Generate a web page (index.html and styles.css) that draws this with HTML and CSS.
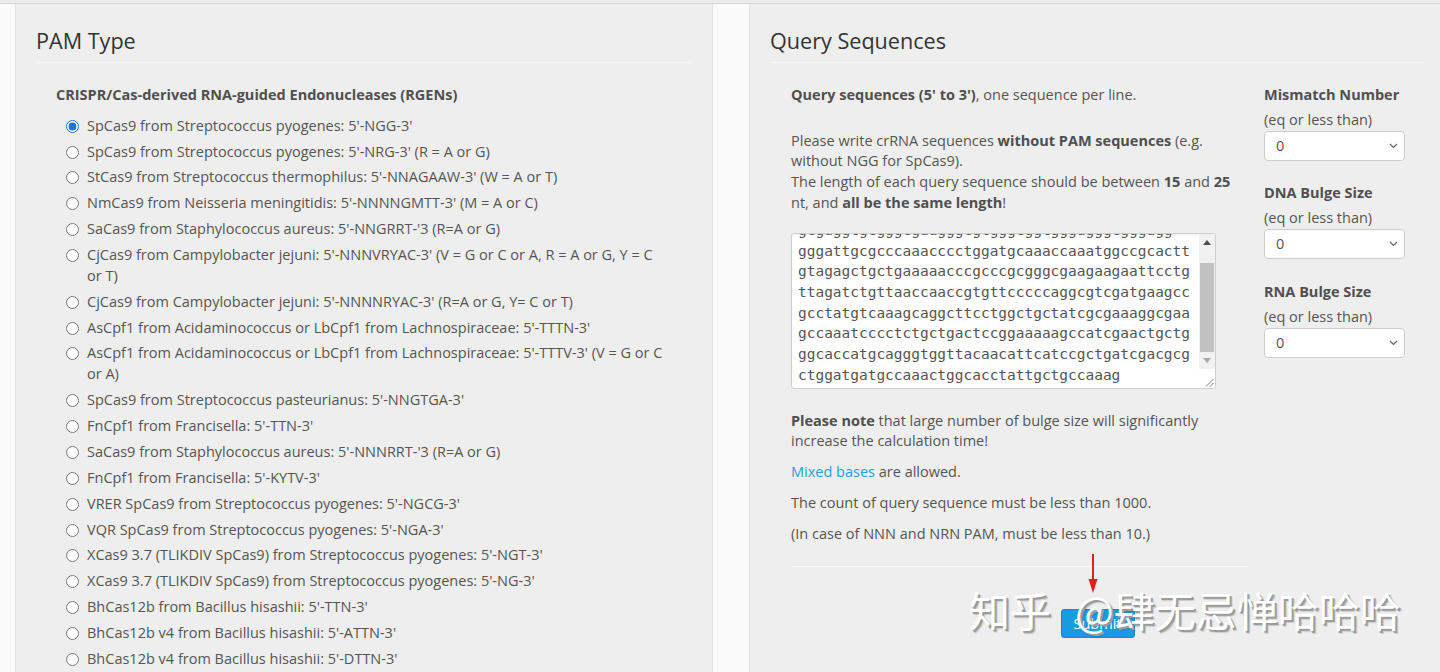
FILE: index.html
```html
<!DOCTYPE html>
<html>
<head>
<meta charset="utf-8">
<link rel="stylesheet" href="styles.css">
</head>
<body>
<div class="topbar"></div>
<div class="page">
  <section class="panel panel-left">
    <h3 class="panel-title">PAM Type</h3>
    <hr class="title-rule">
    <div class="pam-body">
      <div class="group-title">CRISPR/Cas-derived RNA-guided Endonucleases (RGENs)</div>
      <ul class="radio-list">
        <li><label><input type="radio" name="pam" checked><span>SpCas9 from Streptococcus pyogenes: 5'-NGG-3'</span></label></li>
        <li><label><input type="radio" name="pam"><span>SpCas9 from Streptococcus pyogenes: 5'-NRG-3' (R = A or G)</span></label></li>
        <li><label><input type="radio" name="pam"><span>StCas9 from Streptococcus thermophilus: 5'-NNAGAAW-3' (W = A or T)</span></label></li>
        <li><label><input type="radio" name="pam"><span>NmCas9 from Neisseria meningitidis: 5'-NNNNGMTT-3' (M = A or C)</span></label></li>
        <li><label><input type="radio" name="pam"><span>SaCas9 from Staphylococcus aureus: 5'-NNGRRT-'3 (R=A or G)</span></label></li>
        <li><label><input type="radio" name="pam"><span>CjCas9 from Campylobacter jejuni: 5'-NNNVRYAC-3' (V = G or C or A, R = A or G, Y = C or T)</span></label></li>
        <li><label><input type="radio" name="pam"><span>CjCas9 from Campylobacter jejuni: 5'-NNNNRYAC-3' (R=A or G, Y= C or T)</span></label></li>
        <li><label><input type="radio" name="pam"><span>AsCpf1 from Acidaminococcus or LbCpf1 from Lachnospiraceae: 5'-TTTN-3'</span></label></li>
        <li><label><input type="radio" name="pam"><span>AsCpf1 from Acidaminococcus or LbCpf1 from Lachnospiraceae: 5'-TTTV-3' (V = G or C or A)</span></label></li>
        <li><label><input type="radio" name="pam"><span>SpCas9 from Streptococcus pasteurianus: 5'-NNGTGA-3'</span></label></li>
        <li><label><input type="radio" name="pam"><span>FnCpf1 from Francisella: 5'-TTN-3'</span></label></li>
        <li><label><input type="radio" name="pam"><span>SaCas9 from Staphylococcus aureus: 5'-NNNRRT-'3 (R=A or G)</span></label></li>
        <li><label><input type="radio" name="pam"><span>FnCpf1 from Francisella: 5'-KYTV-3'</span></label></li>
        <li><label><input type="radio" name="pam"><span>VRER SpCas9 from Streptococcus pyogenes: 5'-NGCG-3'</span></label></li>
        <li><label><input type="radio" name="pam"><span>VQR SpCas9 from Streptococcus pyogenes: 5'-NGA-3'</span></label></li>
        <li><label><input type="radio" name="pam"><span>XCas9 3.7 (TLIKDIV SpCas9) from Streptococcus pyogenes: 5'-NGT-3'</span></label></li>
        <li><label><input type="radio" name="pam"><span>XCas9 3.7 (TLIKDIV SpCas9) from Streptococcus pyogenes: 5'-NG-3'</span></label></li>
        <li><label><input type="radio" name="pam"><span>BhCas12b from Bacillus hisashii: 5'-TTN-3'</span></label></li>
        <li><label><input type="radio" name="pam"><span>BhCas12b v4 from Bacillus hisashii: 5'-ATTN-3'</span></label></li>
        <li><label><input type="radio" name="pam"><span>BhCas12b v4 from Bacillus hisashii: 5'-DTTN-3'</span></label></li>
      </ul>
    </div>
  </section>

  <section class="panel panel-right">
    <h3 class="panel-title">Query Sequences</h3>
    <hr class="title-rule">
    <div class="query-row">
      <div class="query-main">
        <p class="intro"><b>Query sequences (5' to 3')</b>, one sequence per line.</p>
        <p class="rules">Please write crRNA sequences <b>without PAM sequences</b> (e.g. without NGG for SpCas9).<br>The length of each query sequence should be between <b>15</b> and <b>25</b> nt, and <b>all be the same length</b>!</p>
        <div class="textarea">
          <div class="ta-text">
            <div class="ta-lines">gcgaggtgcgggcgaagggcgtgggcggtgggagggcgggagg
gggattgcgcccaaacccctggatgcaaaccaaatggccgcactt
gtagagctgctgaaaaacccgcccgcgggcgaagaagaattcctg
ttagatctgttaaccaaccgtgttcccccaggcgtcgatgaagcc
gcctatgtcaaagcaggcttcctggctgctatcgcgaaaggcgaa
gccaaatcccctctgctgactccggaaaaagccatcgaactgctg
ggcaccatgcagggtggttacaacattcatccgctgatcgacgcg
ctggatgatgccaaactggcacctattgctgccaaag</div>
          </div>
          <div class="ta-scroll">
            <div class="sb-btn"><svg width="8" height="5" viewBox="0 0 8 5"><path d="M0 5 L4 0 L8 5 Z" fill="#505050"/></svg></div>
            <div class="sb-track"><div class="sb-thumb"></div></div>
            <div class="sb-btn"><svg width="8" height="5" viewBox="0 0 8 5"><path d="M0 0 L4 5 L8 0 Z" fill="#a8a8a8"/></svg></div>
            <div class="sb-corner"><svg width="9" height="9" viewBox="0 0 9 9"><path d="M8.5 1 L1 8.5 M8.5 5 L5 8.5" stroke="#777" stroke-width="1" fill="none"/></svg></div>
          </div>
        </div>
        <p class="note"><b>Please note</b> that large number of bulge size will significantly increase the calculation time!</p>
        <p class="note2"><a class="link">Mixed bases</a> are allowed.</p>
        <p class="note2">The count of query sequence must be less than 1000.</p>
        <p class="note2 last">(In case of NNN and NRN PAM, must be less than 10.)</p>
        <hr class="q-rule">
      </div>
      <div class="query-side">
        <div class="field">
          <div class="field-label">Mismatch Number</div>
          <div class="field-sub">(eq or less than)</div>
          <div class="select"><span>0</span><svg width="9" height="6" viewBox="0 0 9 6"><path d="M1 1 L4.5 4.5 L8 1" stroke="#666" stroke-width="1.2" fill="none"/></svg></div>
        </div>
        <div class="field">
          <div class="field-label">DNA Bulge Size</div>
          <div class="field-sub">(eq or less than)</div>
          <div class="select"><span>0</span><svg width="9" height="6" viewBox="0 0 9 6"><path d="M1 1 L4.5 4.5 L8 1" stroke="#666" stroke-width="1.2" fill="none"/></svg></div>
        </div>
        <div class="field">
          <div class="field-label">RNA Bulge Size</div>
          <div class="field-sub">(eq or less than)</div>
          <div class="select"><span>0</span><svg width="9" height="6" viewBox="0 0 9 6"><path d="M1 1 L4.5 4.5 L8 1" stroke="#666" stroke-width="1.2" fill="none"/></svg></div>
        </div>
      </div>
    </div>
    <div class="submit-row"><button class="btn-submit">Submit</button></div>
  </section>
</div>

<svg class="red-arrow" width="14" height="42" viewBox="0 0 14 42"><path d="M7 1 L7 30" stroke="#e3201c" stroke-width="2"/><path d="M2.5 26 L7 40 L11.5 26 Z" fill="#e3201c"/></svg>
<div class="watermark"><span class="wm-a">知乎</span><span class="wm-b">@肆无忌惮哈哈哈</span></div>
</body>
</html>
```

FILE: styles.css
```css
html, body {
  margin: 0;
  padding: 0;
}
body {
  background: #fafafa;
  font-family: "Open Sans", "Noto Sans", sans-serif;
  font-size: 14.5px;
  line-height: 20.7px;
  color: #555;
  height: 672px;
  overflow: hidden;
  position: relative;
}
.topbar {
  height: 3px;
  background: #ebebeb;
  border-bottom: 1px solid #d4d4d4;
}
.page {
  display: flex;
  padding-left: 15px;
  gap: 36px;
  height: 668px;
}
.panel {
  background: #eeeeee;
  border-left: 1px solid #e2e2e2;
  border-right: 1px solid #e2e2e2;
  padding: 24px 20px 0 20px;
  box-sizing: border-box;
}
.panel-left {
  width: 698px;
  flex: none;
}
.panel-right {
  flex: 1;
  border-right: none;
  padding-right: 15px;
}
.panel-title {
  margin: 0;
  font-size: 21.6px;
  font-weight: 400;
  line-height: 26px;
  color: #333;
}
.title-rule {
  margin: 8px 0 0;
  border: 0;
  border-top: 1px solid #f6f6f6;
  height: 0;
}
.pam-body {
  padding: 0 25px 0 20px;
  margin-top: 21.6px;
}
.group-title {
  font-weight: 700;
  color: #505050;
  margin-bottom: 10.35px;
}
.radio-list {
  list-style: none;
  margin: 0;
  padding: 0;
}
.radio-list li {
  margin-bottom: 5.2px;
}
.radio-list label {
  display: flex;
  align-items: flex-start;
}
.radio-list input {
  flex: none;
  width: 13px;
  height: 13px;
  margin: 4px 8px 0 10px;
  accent-color: #1a73e8;
}
.query-row {
  display: flex;
  gap: 16px;
  padding-left: 21px;
  margin-top: 21.6px;
}
.query-main {
  width: 457px;
  flex: none;
}
.query-main p {
  margin: 0;
}
.query-main b {
  color: #4f4f4f;
}
.query-main .intro {
  margin-bottom: 25.3px;
}
.textarea {
  margin-top: 19.5px;
  width: 425px;
  height: 156px;
  box-sizing: border-box;
  border: 1px solid #cfcfcf;
  border-radius: 3px;
  background: #fff;
  display: flex;
  overflow: hidden;
  box-shadow: inset 0 1px 1px rgba(0,0,0,0.06);
}
.ta-text {
  flex: 1;
  overflow: hidden;
  padding: 0 6px;
  font-family: "DejaVu Sans Mono", monospace;
  font-size: 14.47px;
  line-height: 20.7px;
  color: #555;
}
.ta-lines {
  white-space: pre;
  margin-top: -14px;
}
.ta-scroll {
  width: 16px;
  flex: none;
  display: flex;
  flex-direction: column;
  background: #f1f1f1;
}
.sb-btn {
  height: 17px;
  display: flex;
  align-items: center;
  justify-content: center;
  flex: none;
}
.sb-track {
  flex: 1;
  display: flex;
  flex-direction: column;
  padding-top: 12px;
}
.sb-thumb {
  flex: 1;
  background: #c1c1c1;
  margin: 0 1px;
}
.sb-corner {
  height: 18px;
  flex: none;
  background: #fff;
  display: flex;
  align-items: flex-end;
  justify-content: flex-end;
  padding: 0 1px 1px 0;
}
.query-main .note {
  margin-top: 21.6px;
  margin-bottom: 10.35px;
}
.query-main .note2 {
  margin-bottom: 10.35px;
}
.query-main .note2.last {
  margin-bottom: 0;
}
.link {
  color: #2a9fd6;
  text-decoration: none;
}
.q-rule {
  margin: 21px 0 0;
  border: 0;
  border-top: 1px solid #f8f8f8;
  height: 0;
}
.query-side {
  width: 141px;
  flex: none;
}
.field {
  margin-bottom: 22.3px;
}
.field-label {
  font-weight: 700;
  color: #505050;
  margin-bottom: 4.3px;
}
.field-sub {
  margin-bottom: 0.6px;
}
.select {
  height: 30px;
  box-sizing: border-box;
  background: #fff;
  border: 1px solid #cdcdcd;
  border-radius: 4px;
  display: flex;
  align-items: center;
  justify-content: space-between;
  padding: 0 6px 0 11px;
  color: #555;
}
.submit-row {
  display: flex;
  justify-content: center;
  margin-top: 42px;
}
.btn-submit {
  width: 74px;
  height: 29px;
  background: #1a9be1;
  border: 1px solid #1588c8;
  border-radius: 3px;
  color: #fff;
  font-family: "Open Sans", sans-serif;
  font-size: 14.5px;
  padding: 0;
}
.red-arrow {
  position: absolute;
  left: 1086px;
  top: 553px;
}
.watermark {
  position: absolute;
  left: 969px;
  top: 582px;
  font-family: "Noto Sans CJK SC", sans-serif;
  font-size: 41px;
  line-height: 54px;
  color: #fff;
  text-shadow: 2px 2px 0 #9c9c9c, 3px 3px 1px rgba(0,0,0,0.15);
  white-space: nowrap;
}
.wm-b {
  margin-left: 24px;
}
```
